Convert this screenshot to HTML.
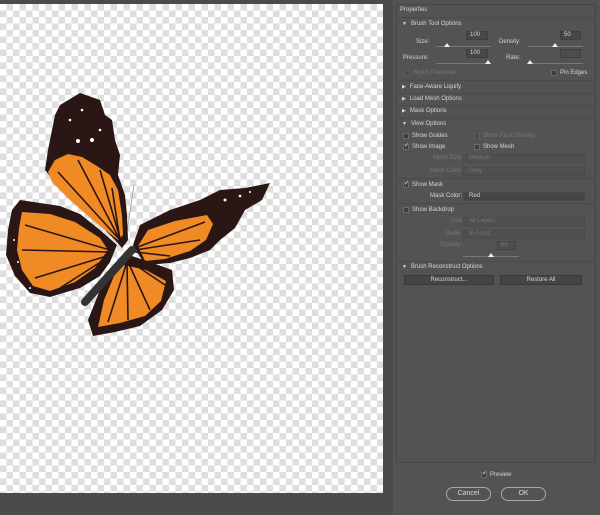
<!DOCTYPE html>
<html><head><style>
*{margin:0;padding:0;box-sizing:border-box}
body{width:600px;height:515px;background:#4b4b4b;position:relative;overflow:hidden;font-family:"Liberation Sans",sans-serif;font-size:6px;color:#d6d6d6}
#cv{position:absolute;left:0;top:4px;width:383px;height:489px;background-color:#fff;background-image:conic-gradient(#dedede 25%,transparent 0 50%,#dedede 0 75%,transparent 0);background-size:13px 13px}
#panel{position:absolute;left:393px;top:0;width:207px;height:515px;background:#535353}
#inner{position:absolute;left:396px;top:4px;width:200px;height:459px;border:1px solid #464646;background:#535353}
.a{position:absolute;white-space:nowrap}
.hd{position:absolute;left:397px;width:198px;height:1px;background:#4a4a4a}
.tri{font-size:5px;margin-right:4px}
.in{position:absolute;background:#474747;border:1px solid #3f3f3f;height:9px;font-size:6px;padding-left:3px;line-height:7px}
.sl{position:absolute;height:1px;background:#777}
.th{position:absolute;width:0;height:0;border-left:3px solid transparent;border-right:3px solid transparent;border-bottom:4px solid #eee}
.cb{position:absolute;width:6px;height:6px;background:#3e3e3e;border:1px solid #6a6a6a}
.ck::after{content:"✓";position:absolute;left:0;top:-3px;font-size:6px;color:#ddd}
.dd{position:absolute;left:463px;width:122px;height:9px;background:#4f4f4f;border:1px solid #4a4a4a;padding-left:5px;line-height:7px;color:#777}
.dis{color:#7a7a7a}
.btn{position:absolute;height:10px;background:#454545;border:1px solid #3a3a3a;text-align:center;line-height:8px}
.pill{position:absolute;height:14px;border:1px solid #a8a8a8;border-radius:7px;text-align:center;line-height:12px;font-size:7px}
</style></head><body>
<div id="cv"></div>
<svg style="position:absolute;left:0;top:0" width="383" height="493">
<line x1="125" y1="245" x2="134" y2="185" stroke="#999" stroke-width="0.8"/>
<polygon fill="#2a1614" points="80,93 100,100 105,115 112,120 115,140 120,155 118,175 125,195 127,215 128,240 122,248 115,240 90,215 65,195 45,170 48,150 52,130 55,115 60,105"/>
<polygon fill="#f08a25" points="48,172 55,160 68,154 82,157 97,166 110,175 118,190 122,215 123,235 118,240 95,222 70,200 52,182"/>
<polygon fill="#2a1614" points="20,200 40,203 60,206 80,214 100,230 117,245 110,262 100,276 80,288 50,297 30,293 15,276 6,255 8,230 12,210"/>
<polygon fill="#f08a25" points="22,212 50,214 75,222 100,238 108,250 95,268 75,282 50,291 33,286 22,270 17,250 19,228"/>
<polygon fill="#2a1614" points="133,245 140,225 170,210 200,200 220,190 245,188 270,183 262,200 245,210 235,228 220,240 210,250 190,258 170,263 145,265"/>
<polygon fill="#f08a25" points="138,246 148,230 175,221 207,215 213,224 206,240 190,251 165,259 145,261"/>
<polygon fill="#2a1614" points="126,254 150,262 172,270 174,290 162,310 140,326 115,332 93,336 88,320 100,290 115,265"/>
<polygon fill="#f08a25" points="124,265 146,270 166,281 161,301 145,316 120,323 98,327 104,300 114,276"/>
<g stroke="#2a1614" stroke-width="1.6" fill="none">
<path d="M120,240 L58,172 M120,240 L78,160 M120,238 L100,170 M120,240 L112,188"/>
<path d="M110,250 L25,225 M110,252 L22,250 M110,255 L35,278 M110,256 L60,288 M105,260 L80,283"/>
<path d="M135,248 L205,222 M135,250 L200,240 M135,252 L170,256"/>
<path d="M128,260 L165,285 M128,262 L150,310 M127,264 L128,320 M126,265 L108,322"/>
</g>
<line x1="85" y1="302" x2="132" y2="250" stroke="#333" stroke-width="8" stroke-linecap="round"/>
<g fill="#fff"><circle cx="78" cy="141" r="2"/><circle cx="92" cy="140" r="2"/><circle cx="70" cy="120" r="1.3"/><circle cx="82" cy="110" r="1.3"/><circle cx="100" cy="130" r="1.3"/><circle cx="225" cy="200" r="1.5"/><circle cx="240" cy="196" r="1.3"/><circle cx="14" cy="240" r="1"/><circle cx="18" cy="262" r="1"/><circle cx="30" cy="288" r="1"/><circle cx="250" cy="192" r="1"/></g>
</svg>
<div id="panel"></div>
<div id="inner"></div>
<div class="a" style="left:400px;top:7px">Properties</div>
<div class="hd" style="top:17px"></div>
<div class="a" style="left:402px;top:21px"><span class="tri">▼</span>Brush Tool Options</div>
<div class="a" style="left:416px;top:39px">Size:</div>
<div class="in" style="left:466px;top:31px;width:22px">100</div>
<div class="sl" style="left:436px;top:46px;width:55px"></div><div class="th" style="left:444px;top:43px"></div>
<div class="a" style="left:499px;top:39px">Density:</div>
<div class="in" style="left:560px;top:31px;width:21px">50</div>
<div class="sl" style="left:528px;top:46px;width:55px"></div><div class="th" style="left:552px;top:43px"></div>
<div class="a" style="left:403px;top:55px">Pressure:</div>
<div class="in" style="left:466px;top:49px;width:22px">100</div>
<div class="sl" style="left:436px;top:63px;width:55px"></div><div class="th" style="left:485px;top:60px"></div>
<div class="a" style="left:506px;top:55px">Rate:</div>
<div class="in" style="left:560px;top:49px;width:21px;background:#4d4d4d"></div>
<div class="sl" style="left:528px;top:63px;width:55px"></div><div class="th" style="left:527px;top:60px"></div>
<div class="cb" style="left:404px;top:70px;opacity:.4"></div><div class="a dis" style="left:413px;top:70px">Stylus Pressure</div>
<div class="cb" style="left:551px;top:70px"></div><div class="a" style="left:560px;top:70px">Pin Edges</div>
<div class="hd" style="top:80px"></div>
<div class="a" style="left:402px;top:84px"><span class="tri">▶</span>Face-Aware Liquify</div>
<div class="hd" style="top:93px"></div>
<div class="a" style="left:402px;top:96px"><span class="tri">▶</span>Load Mesh Options</div>
<div class="hd" style="top:105px"></div>
<div class="a" style="left:402px;top:108px"><span class="tri">▶</span>Mask Options</div>
<div class="hd" style="top:118px"></div>
<div class="a" style="left:402px;top:121px"><span class="tri">▼</span>View Options</div>
<div class="cb" style="left:403px;top:133px"></div><div class="a" style="left:412px;top:133px">Show Guides</div>
<div class="cb" style="left:474px;top:133px;opacity:.4"></div><div class="a dis" style="left:483px;top:133px">Show Face Overlay</div>
<div class="cb ck" style="left:403px;top:144px"></div><div class="a" style="left:412px;top:144px">Show Image</div>
<div class="cb" style="left:474px;top:144px"></div><div class="a" style="left:483px;top:144px">Show Mesh</div>
<div class="a dis" style="left:433px;top:155px">Mesh Size:</div><div class="dd" style="top:154px">Medium</div>
<div class="a dis" style="left:430px;top:168px">Mesh Color:</div><div class="dd" style="top:167px">Gray</div>
<div class="hd" style="top:178px"></div>
<div class="cb ck" style="left:403px;top:182px"></div><div class="a" style="left:412px;top:182px">Show Mask</div>
<div class="a" style="left:430px;top:193px">Mask Color:</div><div class="dd" style="top:192px;background:#444;color:#ddd">Red</div>
<div class="hd" style="top:203px"></div>
<div class="cb" style="left:403px;top:207px"></div><div class="a" style="left:412px;top:207px">Show Backdrop</div>
<div class="a dis" style="left:451px;top:218px">Use:</div><div class="dd" style="top:217px">All Layers</div>
<div class="a dis" style="left:445px;top:231px">Mode:</div><div class="dd" style="top:230px">In Front</div>
<div class="a dis" style="left:440px;top:242px">Opacity:</div>
<div class="in" style="left:497px;top:241px;width:19px;background:#4e4e4e;color:#777">50</div>
<div class="sl" style="left:463px;top:256px;width:56px"></div><div class="th" style="left:488px;top:253px"></div>
<div class="hd" style="top:261px"></div>
<div class="a" style="left:402px;top:264px"><span class="tri">▼</span>Brush Reconstruct Options</div>
<div class="btn" style="left:404px;top:275px;width:90px">Reconstruct...</div>
<div class="btn" style="left:500px;top:275px;width:82px">Restore All</div>
<div class="cb ck" style="left:481px;top:472px"></div><div class="a" style="left:490px;top:472px">Preview</div>
<div class="pill" style="left:446px;top:487px;width:45px">Cancel</div>
<div class="pill" style="left:501px;top:487px;width:45px">OK</div>
</body></html>
